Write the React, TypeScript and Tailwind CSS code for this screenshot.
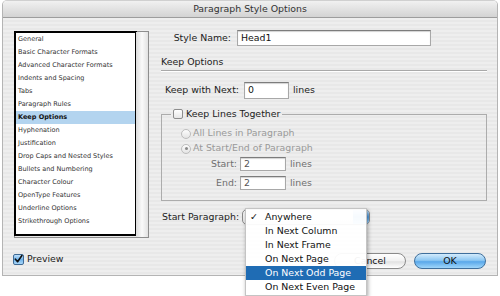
import React from "react";

const listItems = [
  "General",
  "Basic Character Formats",
  "Advanced Character Formats",
  "Indents and Spacing",
  "Tabs",
  "Paragraph Rules",
  "Keep Options",
  "Hyphenation",
  "Justification",
  "Drop Caps and Nested Styles",
  "Bullets and Numbering",
  "Character Colour",
  "OpenType Features",
  "Underline Options",
  "Strikethrough Options",
];

const menuItems = [
  "Anywhere",
  "In Next Column",
  "In Next Frame",
  "On Next Page",
  "On Next Odd Page",
  "On Next Even Page",
];

function TextField({ w, h, value, dim }: { w: string; h: string; value: string; dim?: boolean }) {
  return (
    <div
      className={`${w} ${h} bg-white border border-[#a8a8a8] border-t-[#7c7c7c] shadow-[inset_0_1px_1px_rgba(0,0,0,0.18)] flex items-center pl-[3px] ${
        dim ? "text-[#555]" : "text-[#111]"
      }`}
    >
      {value}
    </div>
  );
}

function Radio({ checked }: { checked?: boolean }) {
  return (
    <div className="w-[10px] h-[10px] rounded-full border border-[#bdbdbd] bg-linear-to-b from-[#fdfdfd] to-[#e4e4e4] flex items-center justify-center">
      {checked && <div className="w-[3px] h-[3px] rounded-full bg-[#8a8a8a]" />}
    </div>
  );
}

export default function App() {
  return (
    <div
      className="w-[500px] h-[296px] bg-white relative overflow-hidden text-[#222]"
      style={{ fontFamily: '"DejaVu Sans", "Liberation Sans", sans-serif' }}
    >
      <div className="ml-[2px] w-[496px] h-[276px] flex flex-col rounded-t-[5px] border border-[#b4b4b4] border-t-[#d0d0d0] overflow-hidden">
        {/* Title bar */}
        <div className="h-[17px] shrink-0 bg-linear-to-b from-[#f1f1f1] to-[#d3d3d3] border-b border-[#9d9d9d] flex items-center justify-center text-[9.4px] text-[#333]">
          Paragraph Style Options
        </div>
        {/* Body */}
        <div className="flex-1 flex bg-[repeating-linear-gradient(180deg,#eeeeee_0px,#eeeeee_2px,#e8e8e8_2px,#e8e8e8_4px)]">
          {/* Left column */}
          <div className="pl-[11px] pt-[13px] flex flex-col">
            <div className="flex w-[135px] h-[207px] border border-[#8e8e8e]">
              <div className="w-[123px] h-full border-2 border-black bg-white -m-[1px] flex flex-col pt-[0px] text-[6.5px] text-[#333]">
                {listItems.map((it) => (
                  <div
                    key={it}
                    className={`h-[13px] shrink-0 flex items-center pl-[2px] ${
                      it === "Keep Options" ? "bg-[#b3d4ef] font-bold text-[#111]" : ""
                    }`}
                  >
                    {it}
                  </div>
                ))}
              </div>
              <div className="flex-1 bg-linear-to-r from-[#dcdcdc] via-[#fafafa] to-[#e2e2e2]" />
            </div>
            <div className="mt-[14px] ml-[-1px] flex items-center gap-[3px]">
              <div className="w-[11px] h-[11px] rounded-[2px] border border-[#3e6a95] bg-linear-to-b from-[#bfe0fb] via-[#6eb2ea] to-[#a8d6f8] flex items-center justify-center">
                <svg width="10" height="10" viewBox="0 0 10 10">
                  <path d="M1.6 5.2 L4 8 L8.8 1.2" stroke="#111" strokeWidth="1.8" fill="none" strokeLinecap="round" strokeLinejoin="round" />
                </svg>
              </div>
              <span className="text-[9.4px] text-[#222]">Preview</span>
            </div>
          </div>

          {/* Right column */}
          <div className="ml-[12px] w-[326px] pt-[12px] flex flex-col text-[9.4px]">
            <div className="flex items-center h-[16px]">
              <span className="w-[76px] text-right pr-[6px]">Style Name:</span>
              <TextField w="w-[194px]" h="h-[16px]" value="Head1" />
            </div>
            <div className="mt-[11px] h-[11px] flex items-center">Keep Options</div>
            <div className="mt-[2px] h-[1px] bg-[#a9a9a9] border-b border-white box-content" />
            <div className="mt-[10px] flex items-center h-[17px]">
              <span className="w-[83px] text-right pr-[5px]">Keep with Next:</span>
              <TextField w="w-[45px]" h="h-[17px]" value="0" />
              <span className="ml-[4px]">lines</span>
            </div>
            <fieldset className="mt-[9px] border border-[#acacac] m-0 p-0 pb-[10px] min-w-0">
              <legend className="ml-[9px] px-[2px] flex items-center gap-[3px] h-[12px]">
                <div className="w-[10px] h-[10px] rounded-[2px] border border-[#8d8d8d] bg-linear-to-b from-white to-[#e6e6e6]" />
                <span className="text-[#222]">Keep Lines Together</span>
              </legend>
              <div className="pt-[6px] pl-[19px] flex flex-col text-[#9a9a9a]">
                <div className="h-[15px] flex items-center gap-[2px]">
                  <Radio />
                  <span>All Lines in Paragraph</span>
                </div>
                <div className="h-[15px] flex items-center gap-[2px]">
                  <Radio checked />
                  <span>At Start/End of Paragraph</span>
                </div>
              </div>
              <div className="flex flex-col text-[#6f6f6f] gap-[5px] mt-[1px]">
                <div className="flex items-center h-[14px]">
                  <span className="w-[78px] text-right pr-[3px]">Start:</span>
                  <TextField w="w-[46px]" h="h-[14px]" value="2" dim />
                  <span className="ml-[4px]">lines</span>
                </div>
                <div className="flex items-center h-[14px]">
                  <span className="w-[78px] text-right pr-[3px]">End:</span>
                  <TextField w="w-[46px]" h="h-[14px]" value="2" dim />
                  <span className="ml-[4px]">lines</span>
                </div>
              </div>
            </fieldset>
            <div className="mt-[8px] flex items-center h-[16px]">
              <span className="w-[81px] pl-[1px]">Start Paragraph:</span>
              <div className="w-[128px] h-[16px] rounded-[5px] border border-[#8a8a8a] bg-linear-to-b from-white to-[#e8e8e8] flex justify-end overflow-hidden">
                <div className="w-[16px] h-full bg-linear-to-b from-[#bfe0fb] via-[#4d9be2] to-[#9fd2f8]" />
              </div>
            </div>
            <div className="mt-[28px] flex justify-end gap-[8px] pr-[1px]">
              <div className="w-[72px] h-[16px] rounded-full border border-[#8a8a8a] bg-[linear-gradient(180deg,#ffffff_0%,#f1f1f1_50%,#e2e2e2_55%,#ffffff_100%)] flex items-center justify-center text-[#111]">
                Cancel
              </div>
              <div className="w-[72px] h-[16px] rounded-full border border-[#3f6f9c] bg-[linear-gradient(180deg,#d3ebfc_0%,#8ec8f3_45%,#5aa8ea_55%,#9fd6fa_100%)] flex items-center justify-center text-[#111]">
                OK
              </div>
            </div>
          </div>
        </div>
      </div>

      {/* Popup menu */}
      <div className="absolute left-[245px] top-[208px] w-[122px] bg-white/95 border border-[#c4c4c4] shadow-[1px_2px_4px_rgba(0,0,0,0.35)] py-[1px] text-[9.4px] text-[#111]">
        {menuItems.map((m, i) => (
          <div
            key={m}
            className={`h-[14px] flex items-center ${i === 4 ? "bg-[#1f6cb4] text-white" : ""}`}
          >
            <span className="w-[19px] pl-[4px]">{i === 0 ? "✓" : ""}</span>
            <span>{m}</span>
          </div>
        ))}
      </div>
    </div>
  );
}
